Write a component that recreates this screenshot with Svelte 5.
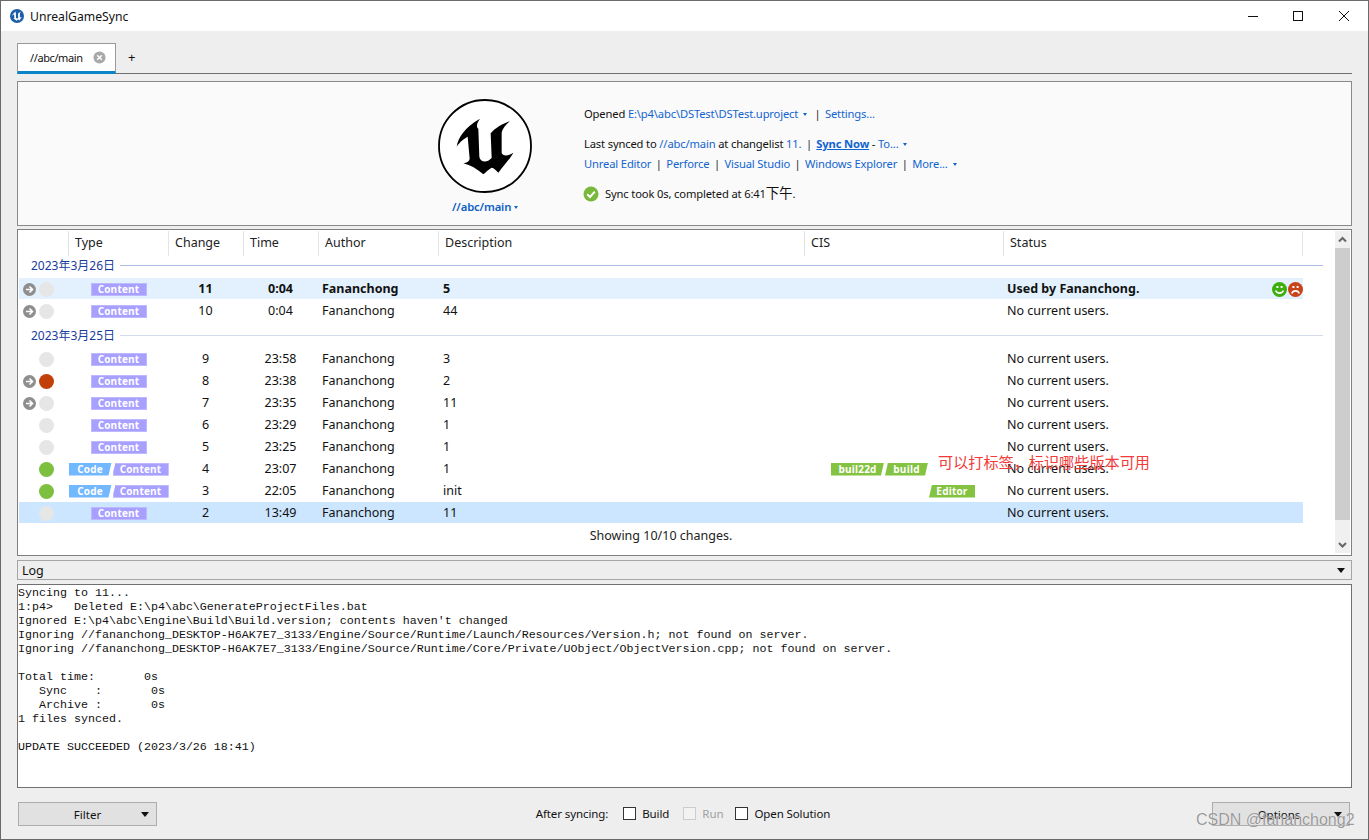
<script>
  const U = "M80 162 C84 135 104 104 150 78 C140 92 138 102 145 108 L148 192 C150 206 168 214 185 196 L182 122 C195 106 216 94 240 85 C222 102 215 112 215 125 L215 180 C218 192 236 190 250 180 C240 200 225 212 205 240 C198 232 192 226 185 225 C176 230 168 238 160 245 C140 228 122 218 100 212 C112 210 118 206 119 198 L113 132 C106 136 90 146 80 162 Z";
  const groups = [
    { date: "2023年3月26日", rows: [
      { arrow: true, dot: "", types: ["Content"], change: 11, time: "0:04", desc: "5", status: "Used by Fananchong.", cls: "current", faces: true },
      { arrow: true, dot: "", types: ["Content"], change: 10, time: "0:04", desc: "44" }
    ]},
    { date: "2023年3月25日", rows: [
      { dot: "", types: ["Content"], change: 9, time: "23:58", desc: "3" },
      { arrow: true, dot: "bad", types: ["Content"], change: 8, time: "23:38", desc: "2" },
      { arrow: true, dot: "", types: ["Content"], change: 7, time: "23:35", desc: "11" },
      { dot: "", types: ["Content"], change: 6, time: "23:29", desc: "1" },
      { dot: "", types: ["Content"], change: 5, time: "23:25", desc: "1" },
      { dot: "good", types: ["Code", "Content"], change: 4, time: "23:07", desc: "1", cis: ["buil22d", "build"], cisCls: "cis-a" },
      { dot: "good", types: ["Code", "Content"], change: 3, time: "22:05", desc: "init", cis: ["Editor"], cisCls: "cis-b" },
      { dot: "", types: ["Content"], change: 2, time: "13:49", desc: "11", cls: "selected" }
    ]}
  ];
  const heads = ["Type", "Change", "Time", "Author", "Description", "CIS", "Status"];
  const log = `Syncing to 11...
1:p4>   Deleted E:\\p4\\abc\\GenerateProjectFiles.bat
Ignored E:\\p4\\abc\\Engine\\Build\\Build.version; contents haven't changed
Ignoring //fananchong_DESKTOP-H6AK7E7_3133/Engine/Source/Runtime/Launch/Resources/Version.h; not found on server.
Ignoring //fananchong_DESKTOP-H6AK7E7_3133/Engine/Source/Runtime/Core/Private/UObject/ObjectVersion.cpp; not found on server.

Total time:       0s
   Sync    :       0s
   Archive :       0s
1 files synced.

UPDATE SUCCEEDED (2023/3/26 18:41)`;
</script>

<div class="window">
  <header class="titlebar">
    <svg class="app-icon" viewBox="0 0 330 330" aria-hidden="true"><circle cx="165" cy="165" r="165" fill="#1c5fa8"/><path d={U} fill="#fff" transform="translate(165 165) scale(1.35) translate(-165 -162)"/></svg>
    <span class="app-title">UnrealGameSync</span>
    <div class="controls">
      <svg viewBox="0 0 139 30" width="139" height="30" aria-hidden="true" fill="none" stroke="#111" stroke-width="1">
        <path d="M19 15.5H29"/><rect x="64.5" y="10.5" width="9" height="9"/><path d="M110 10L120 20M120 10L110 20"/>
      </svg>
    </div>
  </header>

  <main class="body">
    <nav class="tabs">
      <div class="tab">
        <span>//abc/main</span>
        <svg class="tab-close" viewBox="0 0 14 14" aria-hidden="true"><circle cx="7" cy="7" r="6.5" fill="#a8a8a8"/><path d="M4.5 4.5L9.5 9.5M9.5 4.5L4.5 9.5" stroke="#fff" stroke-width="1.6"/></svg>
      </div>
      <span class="tab-add">+</span>
    </nav>

    <section class="project">
      <div class="logo-col">
        <svg class="logo" viewBox="0 0 282 282" aria-hidden="true">
          <circle cx="141" cy="141" r="138" fill="#fff" stroke="#000" stroke-width="5.5"/>
          <path d={U} fill="#000" transform="translate(-24 -19)"/>
        </svg>
        <div class="logo-label">//abc/main <i class="caret small blue"></i></div>
      </div>
      <div class="info">
        <div class="line">Opened <a href="#p">E:\p4\abc\DSTest\DSTest.uproject</a> <i class="caret small blue cgap first-caret"></i> <span class="pipe">|</span> <a href="#s">Settings...</a></div>
        <div class="line gap">Last synced to <a href="#m">//abc/main</a> at changelist <a href="#c">11.</a> <span class="pipe">|</span> <a href="#n" class="sync">Sync Now</a> - <a href="#t">To...</a> <i class="caret small blue cgap"></i></div>
        <div class="line"><a href="#e">Unreal Editor</a> <span class="pipe">|</span> <a href="#f">Perforce</a> <span class="pipe">|</span> <a href="#v">Visual Studio</a> <span class="pipe">|</span> <a href="#w">Windows Explorer</a> <span class="pipe">|</span> <a href="#o">More...</a> <i class="caret small blue cgap"></i></div>
        <div class="line gap status-line">
          <svg class="ok" viewBox="0 0 16 16" aria-hidden="true"><circle cx="8" cy="8" r="7.5" fill="#78b83a"/><path d="M4.2 8.2L7 11L11.8 5.6" fill="none" stroke="#fff" stroke-width="2"/></svg>
          <span class="sync-msg">Sync took 0s, completed at 6:41<span class="cjk">下午</span>.</span>
        </div>
      </div>
    </section>

    <section class="list">
      <div class="list-main">
        <div class="cols head">
          <div class="c-icons"></div>
          {#each heads as h}<div class="hcell">{h}</div>{/each}
          <div class="hcell end"></div>
        </div>
        {#each groups as g, i}
          <div class="group" class:first={i === 0}><span>{g.date}</span><i></i></div>
          {#each g.rows as r}
            <div class="cols row {r.cls ?? ''}">
              <div class="c-icons">
                <span class="arrow-slot">
                  {#if r.arrow}
                    <svg viewBox="0 0 13 13" width="13" height="13" aria-hidden="true"><circle cx="6.5" cy="6.5" r="6.5" fill="#8e8e8e"/><path d="M3 6.5H9M6.5 3.5L9.5 6.5L6.5 9.5" fill="none" stroke="#fff" stroke-width="1.6"/></svg>
                  {/if}
                </span>
                <span class="dot {r.dot}"></span>
              </div>
              <div class="c-type">
                {#each r.types as t, k}
                  <span class="tag {t.toLowerCase()}" class:left={r.types.length > 1 && k === 0} class:right={r.types.length > 1 && k === 1}>{t}</span>
                {/each}
              </div>
              <div class="c-num">{r.change}</div>
              <div class="c-num">{r.time}</div>
              <div class="c-author">Fananchong</div>
              <div class="c-desc">{r.desc}</div>
              <div class="c-cis {r.cisCls ?? ''}">
                {#if r.cis}
                  {#each r.cis as t, k}
                    <span class="tag green" class:left={r.cis.length > 1 && k === 0} class:right={r.cis.length > 1 && k === 1} class:solo={r.cis.length === 1}>{t}</span>
                  {/each}
                {/if}
              </div>
              <div class="c-status">
                <span>{r.status ?? "No current users."}</span>
                {#if r.faces}
                  <span class="faces">
                    <svg viewBox="0 0 15 15" width="15" height="15" aria-hidden="true"><circle cx="7.5" cy="7.5" r="7.5" fill="#3fae0c"/><rect x="4.4" y="4" width="2" height="2" fill="#fff"/><rect x="8.6" y="4" width="2" height="2" fill="#fff"/><path d="M3.6 8.5C5 12 10 12 11.4 8.5" fill="none" stroke="#fff" stroke-width="1.6"/></svg>
                    <svg viewBox="0 0 15 15" width="15" height="15" aria-hidden="true"><circle cx="7.5" cy="7.5" r="7.5" fill="#c8421a"/><rect x="4.4" y="4" width="2" height="2" fill="#fff"/><rect x="8.6" y="4" width="2" height="2" fill="#fff"/><path d="M3.8 11.6C5 8 10 8 11.2 11.6" fill="none" stroke="#fff" stroke-width="1.6"/></svg>
                  </span>
                {/if}
              </div>
            </div>
          {/each}
        {/each}
        <div class="showing">Showing 10/10 changes.</div>
      </div>
      <div class="scrollbar">
        <svg viewBox="0 0 15 17" width="15" height="17" aria-hidden="true"><path d="M4 10.5L7.5 7L11 10.5" fill="none" stroke="#666" stroke-width="2"/></svg>
        <div class="thumb"></div>
        <div class="track"></div>
        <svg viewBox="0 0 15 17" width="15" height="17" aria-hidden="true"><path d="M4 7L7.5 10.5L11 7" fill="none" stroke="#666" stroke-width="2"/></svg>
      </div>
    </section>

    <div class="logbar"><span>Log</span><i class="caret"></i></div>
    <pre class="log">{log}</pre>

    <footer class="footer">
      <button class="btn filter"><span>Filter</span><i class="caret"></i></button>
      <div class="checks">
        <span class="after">After syncing:</span>
        <label><span class="box"></span>Build</label>
        <label class="off"><span class="box"></span>Run</label>
        <label><span class="box"></span>Open Solution</label>
      </div>
      <button class="btn options"><span>Options</span><i class="caret"></i></button>
    </footer>
  </main>

  <div class="note">可以打标签，标识哪些版本可用</div>
  <div class="watermark">CSDN @fananchong2</div>
</div>

<style>
  :global(body) { margin: 0; background: #eee; }
  * { box-sizing: border-box; }
  .window {
    position: relative; width: 1369px; height: 840px; border: 1px solid #6a6a6a; background: #eeeeee;
    display: flex; flex-direction: column; overflow: hidden; color: #111;
    font-family: "Noto Sans", "Noto Sans CJK SC", sans-serif; font-size: 12px;
  }
  .titlebar { height: 30px; background: #fff; display: flex; align-items: center; padding-left: 9px; flex: none; }
  .app-icon { width: 14px; height: 14px; margin-right: 6px; }
  .app-title { font-size: 12.2px; }
  .controls { margin-left: auto; height: 30px; }
  .controls svg { display: block; }
  .body { flex: 1; display: flex; flex-direction: column; padding: 12px 16px 0; min-height: 0; }
  .tabs { height: 31px; border-bottom: 1px solid #6f6f6f; display: flex; align-items: stretch; flex: none; }
  .tab {
    width: 99px; height: 31px; background: #fff; border: 1px solid #999; border-bottom: 3px solid #0a84c8;
    display: flex; align-items: center; padding-left: 12px; position: relative; font-size: 11px; letter-spacing: -0.4px;
  }
  .tab-close { width: 13px; height: 13px; position: absolute; left: 75px; top: 7px; }
  .tab-add { margin-left: 12px; font-size: 13px; line-height: 29px; }
  .project {
    margin-top: 7px; height: 145px; flex: none; background: #fafafa; border: 1px solid #8a8a8a; display: flex;
    font-size: 11.2px; letter-spacing: -0.15px;
  }
  .logo-col { margin-left: 420px; padding-top: 17px; width: 94px; display: flex; flex-direction: column; align-items: center; }
  .logo { width: 94px; height: 94px; flex: none; }
  .logo-label { margin-top: 4px; line-height: 20px; font-weight: 600; color: #0f5fc7; white-space: nowrap; font-size: 11.3px; }
  .info { margin-left: 52px; padding-top: 22px; }
  .line { height: 20px; line-height: 20px; white-space: nowrap; }
  .gap { margin-top: 10px; }
  a { color: #1164d0; text-decoration: none; }
  .sync { font-weight: 700; text-decoration: underline; }
  .pipe { margin: 0 1.7px; color: #222; }
  .status-line { display: flex; align-items: center; }
  .sync-msg { line-height: 18px; height: 18px; display: block; margin-top: -1px; }
  .cjk { font-size: 13.5px; line-height: 1; font-family: "Noto Sans CJK SC", sans-serif; }
  .ok { width: 16px; height: 16px; margin-left: -1px; margin-right: 6px; }
  .caret { display: inline-block; width: 0; height: 0; border: 4.5px solid transparent; border-top: 5px solid #111; border-bottom: 0; }
  .caret.small { border-width: 3px 2.5px 0; vertical-align: 2px; }
  .caret.blue { border-top-color: #1164d0; }
  .cgap { margin-left: 2px; }
  .first-caret { margin-right: 3px; }

  .list { margin-top: 3px; height: 327px; flex: none; background: #fff; border: 1px solid #808080; display: flex; }
  .list-main { width: 1316px; flex: none; padding-left: 1px; }
  .cols { display: grid; grid-template-columns: 49px 101px 75px 75px 120px 366px 199px 299px; width: 1284px; }
  .head { height: 25px; grid-template-columns: 49px 100px 75px 75px 120px 366px 199px 299px 1px; margin-top: 1px; }
  .hcell { border-left: 1px solid #e4e4e4; padding-left: 6px; line-height: 23px; font-size: 12.5px; color: #222; }
  .hcell.end { padding: 0; }
  .group { height: 26px; display: flex; align-items: center; padding-left: 12px; width: 1304px; color: #1a3c9c; font-size: 12px; }
  .group.first { margin-top: -4px; }
  .group i { flex: 1; height: 1px; background: #d5d9ec; margin-left: 5px; }
  .group.first i { background: #a9bde6; }
  .row { height: 22px; padding-bottom: 1px; background-clip: content-box; align-items: center; font-size: 12.5px; line-height: 22px; }
  .row.current { background-color: #e2f1fd; font-weight: 700; }
  .row.selected { background-color: #cce6ff; }
  .c-icons { display: flex; align-items: center; padding-left: 4px; }
  .arrow-slot { width: 13px; height: 13px; display: block; margin-right: 3px; }
  .arrow-slot svg { display: block; }
  .dot { width: 15px; height: 15px; border-radius: 50%; background: #e6e6e6; display: block; }
  .dot.bad { background: #c2410a; }
  .dot.good { background: #7dbf3e; }
  .c-type { display: flex; justify-content: center; align-items: center; }
  .c-num { text-align: center; padding-right: 2px; }
  .c-author { padding-left: 3px; }
  .c-desc { padding-left: 4px; }
  .c-status { padding-left: 3px; display: flex; justify-content: space-between; align-items: center; }
  .faces { display: flex; gap: 1px; }
  .faces svg { display: block; }
  .tag {
    display: block; height: 13px; line-height: 13px; color: #fff; font-size: 10px; letter-spacing: .2px; font-weight: 700; text-align: center;
    font-family: "Open Sans", "Noto Sans", sans-serif;
  }
  .tag.content { background: #a8a0ff; width: 56px; box-shadow: inset 0 0 0 1px #bdb8ff; }
  .tag.code { background: #72b8ff; width: 43px; }
  .tag.green { background: #84c341; }
  .tag.content.right { margin-left: 1px; clip-path: polygon(3px 0, 100% 0, 100% 100%, 0 100%); }
  .tag.code.left { clip-path: polygon(0 0, 100% 0, calc(100% - 3px) 100%, 0 100%); }
  .tag.green.left { width: 53px; clip-path: polygon(0 0, 100% 0, calc(100% - 3px) 100%, 0 100%); }
  .tag.green.right { width: 43px; margin-left: 1px; clip-path: polygon(3px 0, 100% 0, calc(100% - 3px) 100%, 0 100%); }
  .tag.solo { width: 46px; clip-path: polygon(3px 0, 100% 0, 100% 100%, 0 100%); }
  .c-cis { display: flex; align-items: center; height: 21px; }
  .cis-a { padding-left: 26px; }
  .cis-b { padding-left: 124px; }
  .showing { width: 1284px; margin-top: 1px; text-align: center; line-height: 22px; font-size: 12.5px; color: #222; }
  .scrollbar { width: 15px; flex: none; margin: 1px 0 2px 1px; background: #f0f0f0; display: flex; flex-direction: column; }
  .scrollbar svg { display: block; flex: none; }
  .thumb { height: 272px; background: #cdcdcd; flex: none; }
  .track { flex: 1; }

  .logbar {
    margin-top: 4px; height: 20px; flex: none; border: 1px solid #a6a6a6; background: #eee; display: flex; align-items: center;
    justify-content: space-between; padding: 0 6px 0 4px; font-size: 12.5px;
  }
  .log {
    margin: 4px 0 0; height: 204px; flex: none; background: #fff; border: 1px solid #707070; padding: 1px 0 0 0;
    font-family: "Liberation Mono", monospace; font-size: 11.67px; line-height: 14px; color: #111; overflow: hidden;
  }
  .footer { margin-top: 14px; display: grid; grid-template-columns: 1fr auto 1fr; align-items: center; padding: 0 2px 0 1px; }
  .btn {
    height: 24px; background: #e1e1e1; border: 1px solid #adadad; position: relative; font: inherit; font-size: 11.5px; color: #111;
    display: flex; align-items: center; justify-content: center; padding: 0;
  }
  .btn .caret { position: absolute; right: 7px; top: 9px; }
  .filter { width: 139px; justify-self: start; }
  .options { width: 138px; justify-self: end; padding-right: 4px; }
  .checks { display: flex; align-items: center; font-size: 11.5px; letter-spacing: -0.1px; transform: translate(-1px, -1px); }
  .after { margin-right: 15px; }
  .checks label { display: flex; align-items: center; margin-right: 14px; }
  .checks label.off { margin-right: 12px; }
  .checks label:last-child { margin-right: 0; }
  .box { width: 13px; height: 13px; border: 1px solid #333; background: #fff; margin-right: 6px; display: block; }
  .off { color: #a0a0a0; }
  .off .box { border-color: #ccc; background: #f2f2f2; }
  .note { position: absolute; left: 937px; top: 450px; color: #f23a3a; font-size: 15.15px; line-height: 20px; white-space: nowrap; font-family: "Noto Sans CJK SC", sans-serif; }
  .watermark { position: absolute; left: 1195px; top: 809px; color: rgba(120,120,120,.75); font-size: 16px; line-height: 20px; white-space: nowrap; font-family: "Liberation Sans", sans-serif; text-shadow: 0 0 1px #fff; }
</style>
